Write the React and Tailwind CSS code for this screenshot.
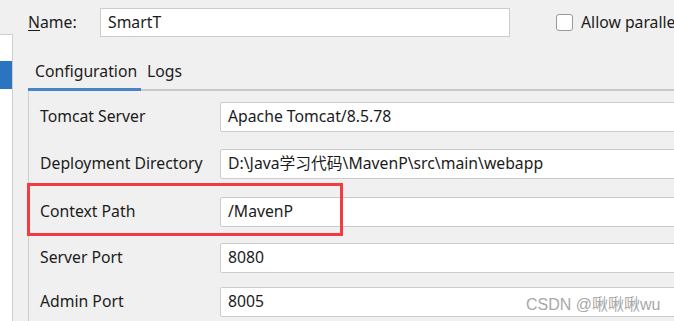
export default function App() {
  const rows = [
    { label: 'Tomcat Server', value: 'Apache Tomcat/8.5.78', mt: 'mt-[11px]' },
    { label: 'Deployment Directory', value: 'D:\\Java学习代码\\MavenP\\src\\main\\webapp', mt: 'mt-[17px]' },
    { label: 'Context Path', value: '/MavenP', mt: 'mt-[18px]' },
    { label: 'Server Port', value: '8080', mt: 'mt-[16px]' },
    { label: 'Admin Port', value: '8005', mt: 'mt-[14px]' },
  ];

  return (
    <div
      className="relative flex w-[674px] h-[321px] overflow-hidden bg-[#f0f0f0] text-[15.75px] text-[#1b1b1b]"
      style={{ fontFamily: '"Noto Sans", "Noto Sans CJK SC", sans-serif' }}
    >
      {/* left list of run configurations */}
      <div className="flex w-[13px] shrink-0 flex-col pt-[34px]">
        <div className="flex-1 border-t border-r border-[#cfcfcf] bg-white">
          <div className="mt-[26px] h-[28px] bg-[#2b74c0]" />
        </div>
      </div>

      {/* main area */}
      <div className="flex flex-1 flex-col pl-[15px]">
        <div className="mt-[8px] flex h-[29px] items-center">
          <span className="w-[72px]">
            <span className="underline underline-offset-2">N</span>ame:
          </span>
          <div className="flex h-[29px] w-[410px] items-center border border-[#cccccc] bg-white pl-[7px]">
            SmartT
          </div>
          <div className="ml-[46px] h-[17px] w-[17px] shrink-0 rounded-[3px] border border-[#999999] bg-white" />
          <span className="ml-[8px] whitespace-nowrap">Allow parallel run</span>
        </div>

        {/* tabs */}
        <div className="mt-[22px] flex h-[32px] items-stretch border-b-2 border-[#c8c8c8]">
          <div className="-mb-[2px] flex w-[113px] items-start border-b-[3px] border-[#4784c8] pl-[7px] pt-[1px]">
            Configuration
          </div>
          <div className="pl-[6px] pt-[1px]">Logs</div>
        </div>

        {/* config panel */}
        <div className="flex flex-1 flex-col border-l border-[#cfcfcf]">
          {rows.map((row) => (
            <div key={row.label} className={`flex h-[30px] items-center ${row.mt}`}>
              <span className="w-[191px] shrink-0 pl-[11px] whitespace-nowrap">{row.label}</span>
              <div className="-mr-[10px] flex h-[30px] flex-1 items-center rounded-[2px] border border-[#cccccc] bg-white pl-[7px] whitespace-nowrap">
                {row.value}
              </div>
            </div>
          ))}
        </div>
      </div>

      {/* highlight box */}
      <div className="absolute left-[27px] top-[183px] h-[53px] w-[316px] border-[3px] border-[#f23c3f]" />

      {/* watermark */}
      <div
        className="absolute left-[526px] top-[293px] text-[16px] text-[#a8a8a8] whitespace-nowrap"
        style={{ fontFamily: '"Liberation Sans", "Noto Sans CJK SC", sans-serif' }}
      >
        CSDN @啾啾啾wu
      </div>
    </div>
  );
}
